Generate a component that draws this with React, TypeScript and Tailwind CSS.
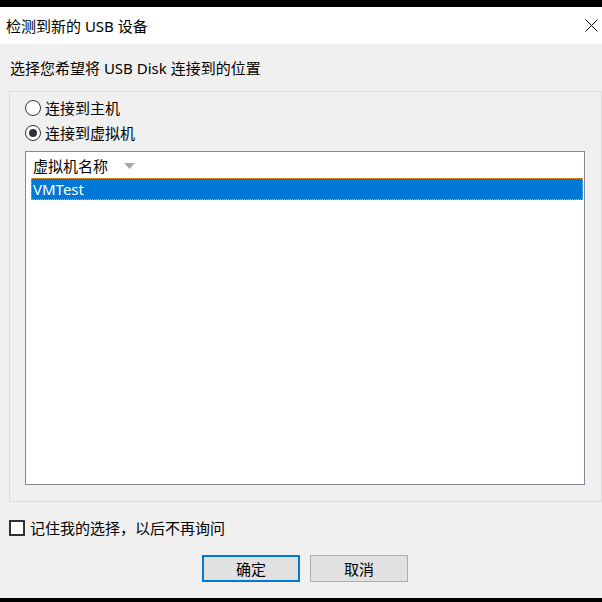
import React from 'react';

const font = { fontFamily: '"Noto Sans", "Noto Sans CJK SC", sans-serif' };

const Radio: React.FC<{ checked?: boolean; label: string }> = ({ checked, label }) => (
  <div className="flex items-center h-[25px]">
    <div className="w-4 h-4 rounded-full border-[1.5px] border-[#333] bg-white flex items-center justify-center">
      {checked && <div className="w-2 h-2 rounded-full bg-[#333]" />}
    </div>
    <span className="ml-1 leading-5">{label}</span>
  </div>
);

export default function App() {
  return (
    <div className="w-[602px] h-[602px] bg-black flex flex-col text-[15px] text-black" style={font}>
      <div className="h-[7px] shrink-0" />
      {/* Title bar */}
      <div className="h-[37px] shrink-0 bg-white flex items-center justify-between pl-[6px] pr-[4px]">
        <span className="leading-5">检测到新的 USB 设备</span>
        <svg width="13" height="13" viewBox="0 0 13 13">
          <path d="M0.5 0.5 L12.5 12.5 M12.5 0.5 L0.5 12.5" stroke="#000" strokeWidth="1" />
        </svg>
      </div>

      {/* Body */}
      <div className="flex-1 bg-[#f0f0f0] flex flex-col">
        <div className="pl-[10px] pt-[14px] leading-5">选择您希望将 USB Disk 连接到的位置</div>

        <div className="ml-[9px] mt-[13px] w-[593px] h-[411px] border border-[#dcdcdc] pt-[3px] pl-[15px] flex flex-col">
          <Radio label="连接到主机" />
          <Radio checked label="连接到虚拟机" />

          <div className="mt-[6px] w-[560px] h-[334px] border border-[#828790] bg-white flex flex-col">
            <div className="h-[26px] flex items-center pl-[7px] pt-[2px]">
              <span className="leading-5">虚拟机名称</span>
              <svg width="11" height="6" viewBox="0 0 11 6" className="ml-[16px]">
                <path d="M0 0 H11 L5.5 6 Z" fill="#a8a8a8" />
              </svg>
            </div>
            <div className="ml-[5px] mr-[1px] h-[22px] bg-[#0078d7] border border-dotted border-[#f5a142] flex items-center pl-[1px] text-white">
              <span className="leading-5">VMTest</span>
            </div>
          </div>
        </div>

        <div className="flex items-center ml-[9px] mt-[16px]">
          <div className="w-4 h-4 border-2 border-[#333] bg-white" />
          <span className="ml-[5px] leading-5">记住我的选择，以后不再询问</span>
        </div>

        <div className="flex ml-[202px] mt-[17px] gap-[10px]">
          <button className="w-[98px] h-[27px] bg-[#e1e1e1] border-2 border-[#0078d7] flex items-center justify-center leading-5">
            确定
          </button>
          <button className="w-[98px] h-[27px] bg-[#e1e1e1] border border-[#adadad] flex items-center justify-center leading-5">
            取消
          </button>
        </div>
      </div>
      <div className="h-[4px] shrink-0" />
    </div>
  );
}
